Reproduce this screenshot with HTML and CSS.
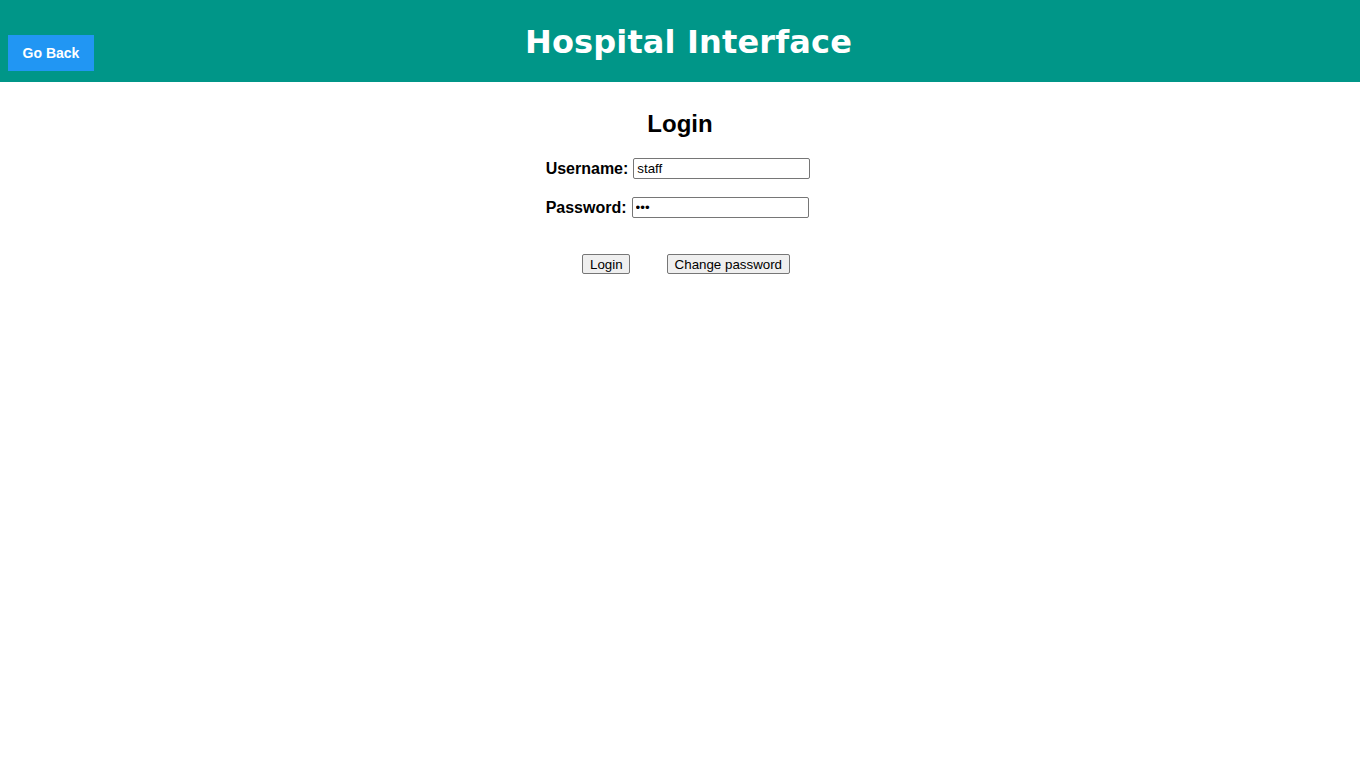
FILE: index.html
```html
<!DOCTYPE html>
<html lang="en">
<head>
<meta charset="utf-8">
<title>Hospital Interface</title>
<link rel="stylesheet" href="styles.css">
</head>
<body>
<header class="topbar">
  <button class="back-btn" type="button">Go Back</button>
  <h1 class="title">Hospital Interface</h1>
</header>
<main class="content">
  <h2 class="login-title">Login</h2>
  <form class="login-form">
    <div class="field">
      <label class="field-label" for="username">Username:</label>
      <input class="field-input" id="username" type="text" value="staff">
    </div>
    <div class="field">
      <label class="field-label" for="password">Password:</label>
      <input class="field-input" id="password" type="password" value="abc">
    </div>
  </form>
  <div class="actions">
    <button class="native-btn" type="button">Login</button>
    <button class="native-btn" type="button">Change password</button>
  </div>
</main>
</body>
</html>
```

FILE: styles.css
```css
html, body {
  margin: 0;
  padding: 0;
  background: #ffffff;
  font-family: "Liberation Sans", Arial, sans-serif;
  color: #000000;
}

.topbar {
  height: 82px;
  background: #009688;
  display: flex;
  align-items: flex-start;
}

.back-btn {
  margin: 35px 0 0 8px;
  height: 36px;
  width: 86px;
  padding: 0;
  border: none;
  background: #2196f3;
  color: #ffffff;
  font-family: "Liberation Sans", Arial, sans-serif;
  font-weight: bold;
  font-size: 14px;
  cursor: pointer;
}

.title {
  flex: 1;
  margin: 22px 77px 0 0;
  line-height: 40px;
  text-align: center;
  font-family: Verdana, "DejaVu Sans", sans-serif;
  font-weight: bold;
  font-size: 32px;
  letter-spacing: 0.15px;
  color: #ffffff;
}

.content {
  display: flex;
  flex-direction: column;
  align-items: center;
}

.login-title {
  margin: 28px 0 20px 0;
  font-size: 24px;
  font-weight: bold;
}

.login-form {
  display: flex;
  flex-direction: column;
  gap: 18px;
  padding-right: 4px;
  align-items: flex-start;
}

.field {
  display: flex;
  align-items: center;
  gap: 5px;
  height: 21px;
}

.field-label {
  font-size: 16px;
  font-weight: bold;
}

.field-input {
  box-sizing: border-box;
  width: 177px;
  height: 21px;
  margin: 0;
  padding: 1px 3px;
  border: 1px solid #767676;
  border-radius: 2px;
  font-family: "Liberation Sans", Arial, sans-serif;
  font-size: 13.333px;
  color: #000000;
  background: #ffffff;
}

.actions {
  display: flex;
  gap: 37px;
  margin-top: 36px;
  padding-left: 12px;
}

.native-btn {
  box-sizing: border-box;
  height: 20px;
  margin: 0;
  padding: 0 6.5px;
  border: 1px solid #767676;
  border-radius: 2px;
  background: #efefef;
  font-family: "Liberation Sans", Arial, sans-serif;
  font-size: 13.333px;
  color: #000000;
}
```
